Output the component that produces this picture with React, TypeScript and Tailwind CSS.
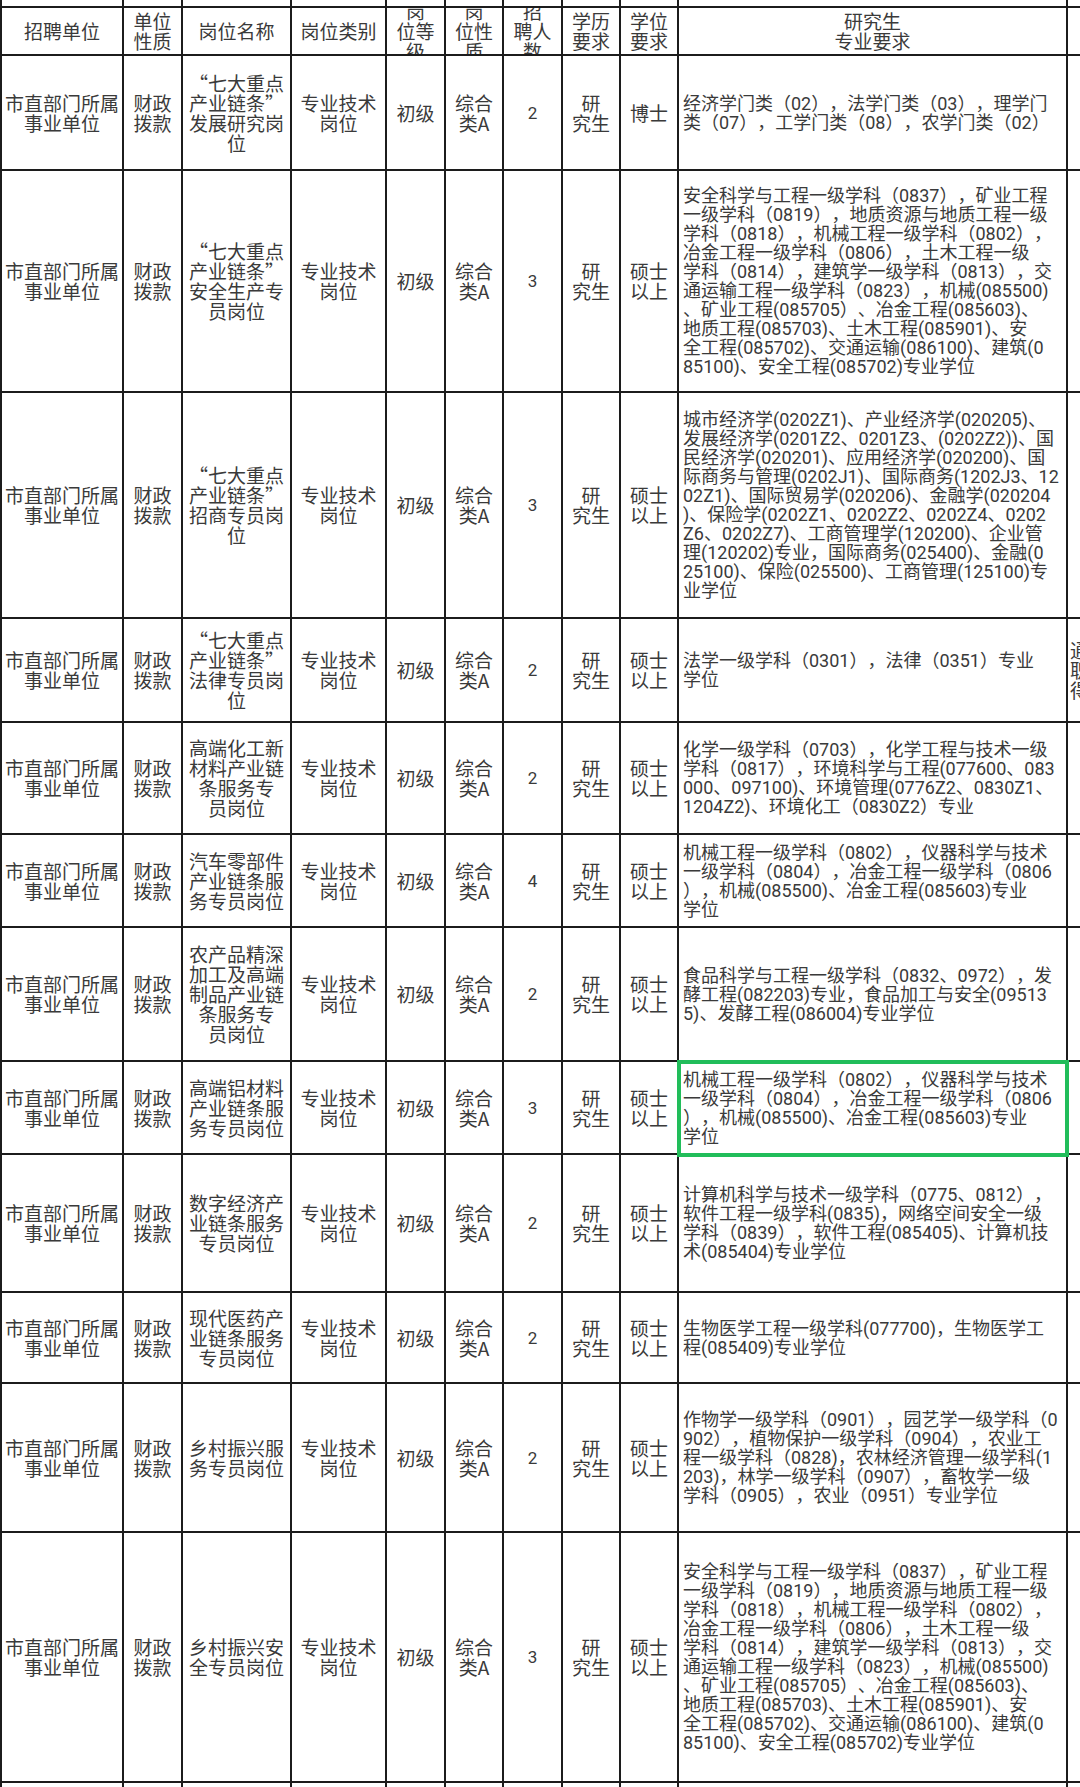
import React from "react";

type Row = {
  h: string;
  name: string[];
  count: string;
  degree: string[];
  major: string[];
  note?: string[];
  highlight?: boolean;
};

const line = "border-[#1c1c1c]";

const safety = [
  "安全科学与工程一级学科（0837），矿业工程",
  "一级学科（0819），地质资源与地质工程一级",
  "学科（0818），机械工程一级学科（0802），",
  "冶金工程一级学科（0806），土木工程一级",
  "学科（0814），建筑学一级学科（0813），交",
  "通运输工程一级学科（0823），机械(085500)",
  "、矿业工程(085705）、冶金工程(085603)、",
  "地质工程(085703)、土木工程(085901)、安",
  "全工程(085702)、交通运输(086100)、建筑(0",
  "85100)、安全工程(085702)专业学位",
];

const machine = [
  "机械工程一级学科（0802），仪器科学与技术",
  "一级学科（0804），冶金工程一级学科（0806",
  "），机械(085500)、冶金工程(085603)专业",
  "学位",
];

const rows: Row[] = [
  {
    h: "h-[115px]",
    name: ["“七大重点", "产业链条”", "发展研究岗", "位"],
    count: "2",
    degree: ["博士"],
    major: [
      "经济学门类（02），法学门类（03），理学门",
      "类（07），工学门类（08），农学门类（02）",
    ],
  },
  {
    h: "h-[222px]",
    name: ["“七大重点", "产业链条”", "安全生产专", "员岗位"],
    count: "3",
    degree: ["硕士", "以上"],
    major: safety,
  },
  {
    h: "h-[226px]",
    name: ["“七大重点", "产业链条”", "招商专员岗", "位"],
    count: "3",
    degree: ["硕士", "以上"],
    major: [
      "城市经济学(0202Z1)、产业经济学(020205)、",
      "发展经济学(0201Z2、0201Z3、(0202Z2))、国",
      "民经济学(020201)、应用经济学(020200)、国",
      "际商务与管理(0202J1)、国际商务(1202J3、12",
      "02Z1)、国际贸易学(020206)、金融学(020204",
      ")、保险学(0202Z1、0202Z2、0202Z4、0202",
      "Z6、0202Z7)、工商管理学(120200)、企业管",
      "理(120202)专业，国际商务(025400)、金融(0",
      "25100)、保险(025500)、工商管理(125100)专",
      "业学位",
    ],
  },
  {
    h: "h-[104px]",
    name: ["“七大重点", "产业链条”", "法律专员岗", "位"],
    count: "2",
    degree: ["硕士", "以上"],
    major: ["法学一级学科（0301），法律（0351）专业", "学位"],
    note: ["通过国家统一法律", "职业资格考试，取", "得法律职业资格证书"],
  },
  {
    h: "h-[112px]",
    name: ["高端化工新", "材料产业链", "条服务专", "员岗位"],
    count: "2",
    degree: ["硕士", "以上"],
    major: [
      "化学一级学科（0703），化学工程与技术一级",
      "学科（0817），环境科学与工程(077600、083",
      "000、097100)、环境管理(0776Z2、0830Z1、",
      "1204Z2)、环境化工（0830Z2）专业",
    ],
  },
  {
    h: "h-[93px]",
    name: ["汽车零部件", "产业链条服", "务专员岗位"],
    count: "4",
    degree: ["硕士", "以上"],
    major: machine,
  },
  {
    h: "h-[134px]",
    name: ["农产品精深", "加工及高端", "制品产业链", "条服务专", "员岗位"],
    count: "2",
    degree: ["硕士", "以上"],
    major: [
      "食品科学与工程一级学科（0832、0972），发",
      "酵工程(082203)专业，食品加工与安全(09513",
      "5)、发酵工程(086004)专业学位",
    ],
  },
  {
    h: "h-[93px]",
    name: ["高端铝材料", "产业链条服", "务专员岗位"],
    count: "3",
    degree: ["硕士", "以上"],
    major: machine,
    highlight: true,
  },
  {
    h: "h-[138px]",
    name: ["数字经济产", "业链条服务", "专员岗位"],
    count: "2",
    degree: ["硕士", "以上"],
    major: [
      "计算机科学与技术一级学科（0775、0812），",
      "软件工程一级学科(0835)，网络空间安全一级",
      "学科（0839），软件工程(085405)、计算机技",
      "术(085404)专业学位",
    ],
  },
  {
    h: "h-[91px]",
    name: ["现代医药产", "业链条服务", "专员岗位"],
    count: "2",
    degree: ["硕士", "以上"],
    major: ["生物医学工程一级学科(077700)，生物医学工", "程(085409)专业学位"],
  },
  {
    h: "h-[149px]",
    name: ["乡村振兴服", "务专员岗位"],
    count: "2",
    degree: ["硕士", "以上"],
    major: [
      "作物学一级学科（0901），园艺学一级学科（0",
      "902），植物保护一级学科（0904），农业工",
      "程一级学科（0828)，农林经济管理一级学科(1",
      "203)，林学一级学科（0907），畜牧学一级",
      "学科（0905），农业（0951）专业学位",
    ],
  },
  {
    h: "h-[250px]",
    name: ["乡村振兴安", "全专员岗位"],
    count: "3",
    degree: ["硕士", "以上"],
    major: safety,
  },
];

const Lines: React.FC<{ items: string[] }> = ({ items }) => (
  <div>
    {items.map((t, i) => (
      <div key={i} className="whitespace-nowrap">
        {t}
      </div>
    ))}
  </div>
);

const cell = `flex shrink-0 items-center justify-center overflow-hidden border-r-2 ${line} text-center`;

const EmptyRow: React.FC<{ h: string }> = ({ h }) => (
  <div className={`flex border-b-2 ${line} ${h}`}>
    <div className={`${cell} w-[122px]`} />
    <div className={`${cell} w-[59px]`} />
    <div className={`${cell} w-[109px]`} />
    <div className={`${cell} w-[95px]`} />
    <div className={`${cell} w-[59px]`} />
    <div className={`${cell} w-[58px]`} />
    <div className={`${cell} w-[59px]`} />
    <div className={`${cell} w-[58px]`} />
    <div className={`${cell} w-[58px]`} />
    <div className={`${cell} w-[389px]`} />
    <div className={`${cell} w-[200px]`} />
  </div>
);

const Header: React.FC = () => (
  <div className={`flex h-[48px] border-b-2 ${line} text-[19px] leading-[20px]`}>
    <div className={`${cell} w-[122px]`}>招聘单位</div>
    <div className={`${cell} w-[59px]`}>
      <Lines items={["单位", "性质"]} />
    </div>
    <div className={`${cell} w-[109px]`}>岗位名称</div>
    <div className={`${cell} w-[95px]`}>岗位类别</div>
    <div className={`${cell} w-[59px]`}>
      <Lines items={["岗", "位等", "级"]} />
    </div>
    <div className={`${cell} w-[58px]`}>
      <Lines items={["岗", "位性", "质"]} />
    </div>
    <div className={`${cell} w-[59px]`}>
      <Lines items={["招", "聘人", "数"]} />
    </div>
    <div className={`${cell} w-[58px]`}>
      <Lines items={["学历", "要求"]} />
    </div>
    <div className={`${cell} w-[58px]`}>
      <Lines items={["学位", "要求"]} />
    </div>
    <div className={`${cell} w-[389px]`}>
      <Lines items={["研究生", "专业要求"]} />
    </div>
    <div className={`${cell} w-[200px]`} />
  </div>
);

const DataRow: React.FC<{ row: Row }> = ({ row }) => (
  <div className={`flex border-b-2 ${line} text-[19px] leading-[20px] ${row.h}`}>
    <div className={`${cell} w-[122px]`}>
      <Lines items={["市直部门所属", "事业单位"]} />
    </div>
    <div className={`${cell} w-[59px]`}>
      <Lines items={["财政", "拨款"]} />
    </div>
    <div className={`${cell} w-[109px]`}>
      <Lines items={row.name} />
    </div>
    <div className={`${cell} w-[95px]`}>
      <Lines items={["专业技术", "岗位"]} />
    </div>
    <div className={`${cell} w-[59px]`}>初级</div>
    <div className={`${cell} w-[58px]`}>
      <Lines items={["综合", "类A"]} />
    </div>
    <div className={`${cell} w-[59px] font-['Roboto',sans-serif] text-[17px]`}>{row.count}</div>
    <div className={`${cell} w-[58px]`}>
      <Lines items={["研", "究生"]} />
    </div>
    <div className={`${cell} w-[58px]`}>
      <Lines items={row.degree} />
    </div>
    <div
      className={`relative flex w-[389px] shrink-0 items-center border-r-2 ${line} pl-[4px] text-left font-['Roboto','Noto_Sans_CJK_SC',sans-serif] text-[18px] leading-[19px] [text-spacing-trim:space-all]`}
    >
      <Lines items={row.major} />
      {row.highlight && (
        <div className="pointer-events-none absolute -top-[2px] -bottom-[4px] -left-[2px] -right-[3px] z-10 border-4 border-[#21bd5a]" />
      )}
    </div>
    <div className="flex w-[200px] shrink-0 items-center overflow-hidden pl-[2px] text-left">
      {row.note && <Lines items={row.note} />}
    </div>
  </div>
);

const App: React.FC = () => {
  return (
    <div
      className={`h-[1787px] w-[1080px] overflow-hidden border-l-2 ${line} bg-white font-['Noto_Sans_CJK_SC',sans-serif] text-[#3a3a3a] [text-spacing-trim:space-all]`}
    >
      <EmptyRow h="h-[8px]" />
      <Header />
      {rows.map((row, i) => (
        <DataRow key={i} row={row} />
      ))}
      <EmptyRow h="h-[20px]" />
    </div>
  );
};

export default App;
